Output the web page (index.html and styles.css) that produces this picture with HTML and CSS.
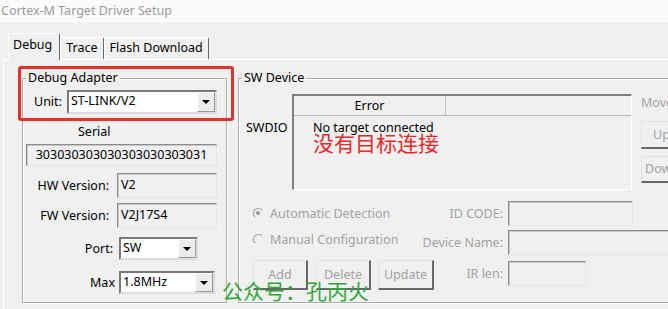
FILE: index.html
```html
<!DOCTYPE html>
<html lang="en">
  <head>
    <meta charset="UTF-8" />
    <meta name="viewport" content="width=device-width, initial-scale=1.0" />
    <title>Cortex-M Target Driver Setup</title>
    <link rel="stylesheet" href="styles.css">
  </head>
  <body>
    <div class="window">
      <div class="titlebar">Cortex-M Target Driver Setup</div>

      <div class="tabs">
        <div class="tab tab-active">Debug</div>
        <div class="tab">Trace</div>
        <div class="tab">Flash Download</div>
      </div>

      <div class="panel">
        <div class="group group-adapter">
          <span class="group-title">Debug Adapter</span>

          <div class="row row-unit">
            <span class="lbl lbl-unit">Unit:</span>
            <div class="combo combo-unit">
              <span class="combo-value">ST-LINK/V2</span>
              <span class="combo-btn"></span>
            </div>
          </div>

          <div class="serial-label">Serial</div>
          <div class="field field-serial">303030303030303030303031</div>

          <div class="row row-hw">
            <span class="lbl lbl-version">HW Version:</span>
            <div class="field field-version">V2</div>
          </div>
          <div class="row row-fw">
            <span class="lbl lbl-version">FW Version:</span>
            <div class="field field-version">V2J17S4</div>
          </div>

          <div class="row row-port">
            <span class="lbl lbl-port">Port:</span>
            <div class="combo combo-port">
              <span class="combo-value">SW</span>
              <span class="combo-btn"></span>
            </div>
          </div>
          <div class="row row-max">
            <span class="lbl lbl-max">Max</span>
            <div class="combo combo-max">
              <span class="combo-value">1.8MHz</span>
              <span class="combo-btn"></span>
            </div>
          </div>
        </div>

        <div class="group group-device">
          <span class="group-title">SW Device</span>

          <div class="device-top">
            <span class="swdio">SWDIO</span>
            <div class="device-table">
              <div class="table-head">
                <span class="th th-error">Error</span>
                <span class="th"></span>
              </div>
              <div class="table-body">
                <div class="no-target">No target connected</div>
                <div class="note-red">没有目标连接</div>
              </div>
            </div>
            <div class="move-col">
              <span class="move-label">Move</span>
              <div class="btn btn-up">Up</div>
              <div class="btn btn-down">Down</div>
            </div>
          </div>

          <div class="config-row config-first">
            <div class="config-left">
              <span class="radio radio-on"></span>
              <span class="radio-text">Automatic Detection</span>
            </div>
            <div class="config-right">
              <span class="lbl lbl-cfg">ID CODE:</span>
              <div class="field field-cfg field-id"></div>
            </div>
          </div>
          <div class="config-row config-second">
            <div class="config-left">
              <span class="radio"></span>
              <span class="radio-text">Manual Configuration</span>
            </div>
            <div class="config-right">
              <span class="lbl lbl-cfg">Device Name:</span>
              <div class="field field-cfg field-name"></div>
            </div>
          </div>
          <div class="config-row config-third">
            <div class="config-left config-buttons">
              <div class="btn btn-add">Add</div>
              <div class="btn btn-delete">Delete</div>
              <div class="btn btn-update">Update</div>
            </div>
            <div class="config-right">
              <span class="lbl lbl-cfg">IR len:</span>
              <div class="field field-cfg field-ir"></div>
            </div>
          </div>
        </div>
      </div>

      <!-- annotations drawn over the dialog -->
      <div class="mark-box"></div>
      <div class="note-green">公众号：孔丙火</div>
    </div>
  </body>
</html>
```

FILE: styles.css
```css
:root {
  --clr-face: #f0f0f0;
  --clr-shadow: #a0a0a0;
  --clr-dark: #696969;
  --clr-light: #ffffff;
  --clr-disabled: #a3a3a3;
}

* {
  margin: 0;
  padding: 0;
  box-sizing: border-box;
}

body {
  font-family: "Noto Sans", "Noto Sans CJK SC", sans-serif;
  font-size: 12.5px;
  line-height: 16px;
  color: #000;
  background-color: var(--clr-face);
  width: 668px;
  height: 309px;
  overflow: hidden;
}

.window {
  position: relative;
  width: 668px;
  height: 309px;
  overflow: hidden;
  white-space: nowrap;
}

.titlebar {
  height: 22px;
  line-height: 22px;
  padding-left: 1px;
  background-color: #fbfbfb;
  color: #9a9a9a;
}

/* tabs */

.tabs {
  display: flex;
  align-items: flex-end;
  height: 37px;
  padding-left: 8px;
}

.tab {
  height: 22px;
  line-height: 20px;
  padding: 0 5px 0 5px;
  border-top: 1px solid var(--clr-light);
  border-left: 1px solid var(--clr-light);
  border-right: 1px solid var(--clr-dark);
  border-radius: 2px 2px 0 0;
}

.tab-active {
  height: 27px;
  line-height: 22px;
  margin-bottom: -1px;
  padding: 0 7px 0 4px;
  background-color: var(--clr-face);
  position: relative;
}

.panel {
  display: flex;
  align-items: flex-start;
  height: 250px;
  padding: 18px 0 0 18px;
  border-top: 1px solid var(--clr-light);
  border-left: 1px solid var(--clr-light);
  margin-left: 3px;
}

/* group boxes */

.group {
  position: relative;
  flex-shrink: 0;
  height: 225px;
  border: 1px solid #adadad;
  box-shadow: 1px 1px 0 var(--clr-light), inset 1px 1px 0 var(--clr-light);
}

.group-title {
  position: absolute;
  top: -9px;
  left: 3px;
  padding: 0 2px;
  background-color: var(--clr-face);
}

.group-adapter {
  width: 205px;
}

.group-device {
  width: 450px;
  margin-left: 11px;
}

/* left column */

.row {
  display: flex;
  align-items: center;
}

.lbl {
  flex-shrink: 0;
}

.row-unit {
  margin-top: 11px;
}

.lbl-unit {
  width: 44px;
  padding-left: 11px;
}

.serial-label {
  margin-top: 10px;
  padding-left: 55px;
}

.field {
  background-color: var(--clr-face);
  border: 1px solid;
  border-color: #8c8c8c #e6e6e6 #e6e6e6 #8c8c8c;
  box-shadow: inset 1px 1px 0 #c8c8c8;
}

.field-serial {
  width: 191px;
  height: 22px;
  line-height: 20px;
  margin: 4px 0 0 3px;
  text-align: center;
}

.row-hw {
  margin-top: 7px;
}

.row-fw {
  margin-top: 5px;
}

.lbl-version {
  width: 94px;
  padding-right: 8px;
  text-align: right;
}

.field-version {
  width: 100px;
  height: 25px;
  padding: 3px 0 0 3px;
}

.row-port {
  margin-top: 9px;
}

.row-max {
  margin-top: 11px;
}

.lbl-port {
  width: 96px;
  padding-right: 6px;
  text-align: right;
}

.lbl-max {
  width: 96px;
  padding-right: 4px;
  text-align: right;
}

/* combo boxes */

.combo {
  display: flex;
  align-items: stretch;
  background-color: #fff;
  border: 2px solid;
  border-color: #7a7a7a #dcdcdc #dcdcdc #7a7a7a;
}

.combo-value {
  flex: 1;
  padding-left: 2px;
  line-height: 18px;
}

.combo-btn {
  position: relative;
  width: 18px;
  background-color: #ececec;
  border-right: 1px solid #9a9a9a;
  border-bottom: 1px solid #9a9a9a;
  border-top: 1px solid #fff;
  border-left: 1px solid #fff;
}

.combo-btn::after {
  content: "";
  position: absolute;
  left: 4px;
  top: 50%;
  margin-top: -2px;
  border-left: 4px solid transparent;
  border-right: 4px solid transparent;
  border-top: 4px solid #000;
}

.combo-unit {
  width: 150px;
  height: 24px;
}

.combo-port {
  width: 79px;
  height: 23px;
}

.combo-max {
  width: 96px;
  height: 23px;
}

/* right column */

.device-top {
  display: flex;
  align-items: flex-start;
  margin-top: 15px;
}

.swdio {
  flex-shrink: 0;
  width: 53px;
  padding-left: 7px;
  margin-top: 26px;
}

.device-table {
  flex-shrink: 0;
  width: 340px;
  height: 96px;
  border-top: 2px solid #808080;
  border-left: 2px solid #808080;
  border-right: 1px solid var(--clr-light);
  border-bottom: 1px solid var(--clr-light);
}

.table-head {
  display: flex;
  height: 20px;
  border-bottom: 1px solid #b9b9b9;
}

.th {
  flex: 1;
  line-height: 19px;
}

.th-error {
  flex: 0 0 152px;
  text-align: center;
  border-right: 1px solid #c4c4c4;
}

.table-body {
  padding: 4px 0 0 19px;
}

.note-red {
  margin-top: -5px;
  font-family: "Noto Sans CJK SC", sans-serif;
  font-size: 21px;
  line-height: 22px;
  color: #e42a2a;
}

.move-col {
  display: flex;
  flex-direction: column;
  flex-shrink: 0;
  margin-left: 9px;
}

.move-label {
  margin-top: 1px;
  color: var(--clr-disabled);
}

.btn {
  display: flex;
  align-items: center;
  justify-content: center;
  flex-shrink: 0;
  color: var(--clr-disabled);
  background-color: var(--clr-face);
  border-top: 1px solid #e4e4e4;
  border-left: 1px solid #e4e4e4;
  border-right: 2px solid var(--clr-dark);
  border-bottom: 2px solid var(--clr-dark);
}

.btn-up {
  width: 60px;
  height: 28px;
  margin-top: 10px;
  justify-content: flex-start;
  padding-left: 11px;
}

.btn-down {
  width: 60px;
  height: 27px;
  margin-top: 7px;
  justify-content: flex-start;
  padding-left: 3px;
}

.config-row {
  display: flex;
  align-items: flex-start;
}

.config-first {
  margin-top: 11px;
}

.config-second {
  margin-top: 4px;
}

.config-third {
  margin-top: 5px;
}

.config-left {
  display: flex;
  align-items: center;
  flex-shrink: 0;
  width: 182px;
  height: 25px;
  padding-left: 14px;
  color: var(--clr-disabled);
}

.config-second .config-left {
  height: 19px;
}

.config-buttons {
  height: 30px;
  gap: 8px;
}

.btn-add {
  width: 55px;
  height: 30px;
}

.btn-delete {
  width: 55px;
  height: 30px;
}

.btn-update {
  width: 56px;
  height: 30px;
  margin-left: -1px;
}

.radio {
  flex-shrink: 0;
  position: relative;
  width: 11px;
  height: 11px;
  margin-right: 6px;
  border-radius: 50%;
  border: 1px solid;
  border-color: #9a9a9a #ececec #ececec #9a9a9a;
}

.radio-on::after {
  content: "";
  position: absolute;
  left: 2px;
  top: 2px;
  width: 4px;
  height: 4px;
  border-radius: 50%;
  background-color: #9a9a9a;
}

.config-right {
  display: flex;
  align-items: center;
}

.config-third .config-right {
  margin-top: 1px;
}

.lbl-cfg {
  width: 87px;
  padding-right: 5px;
  text-align: right;
  color: var(--clr-disabled);
}

.field-cfg {
  height: 25px;
}

.field-id {
  width: 125px;
}

.field-name {
  width: 200px;
}

.field-ir {
  width: 78px;
}

/* annotations */

.mark-box {
  position: absolute;
  left: 18px;
  top: 66px;
  width: 216px;
  height: 55px;
  border: 3px solid #e5312d;
  border-radius: 3px;
}

.note-green {
  position: absolute;
  left: 222px;
  top: 279px;
  font-family: "Noto Sans CJK SC", sans-serif;
  font-size: 21px;
  line-height: 22px;
  color: #30a83a;
}
```
